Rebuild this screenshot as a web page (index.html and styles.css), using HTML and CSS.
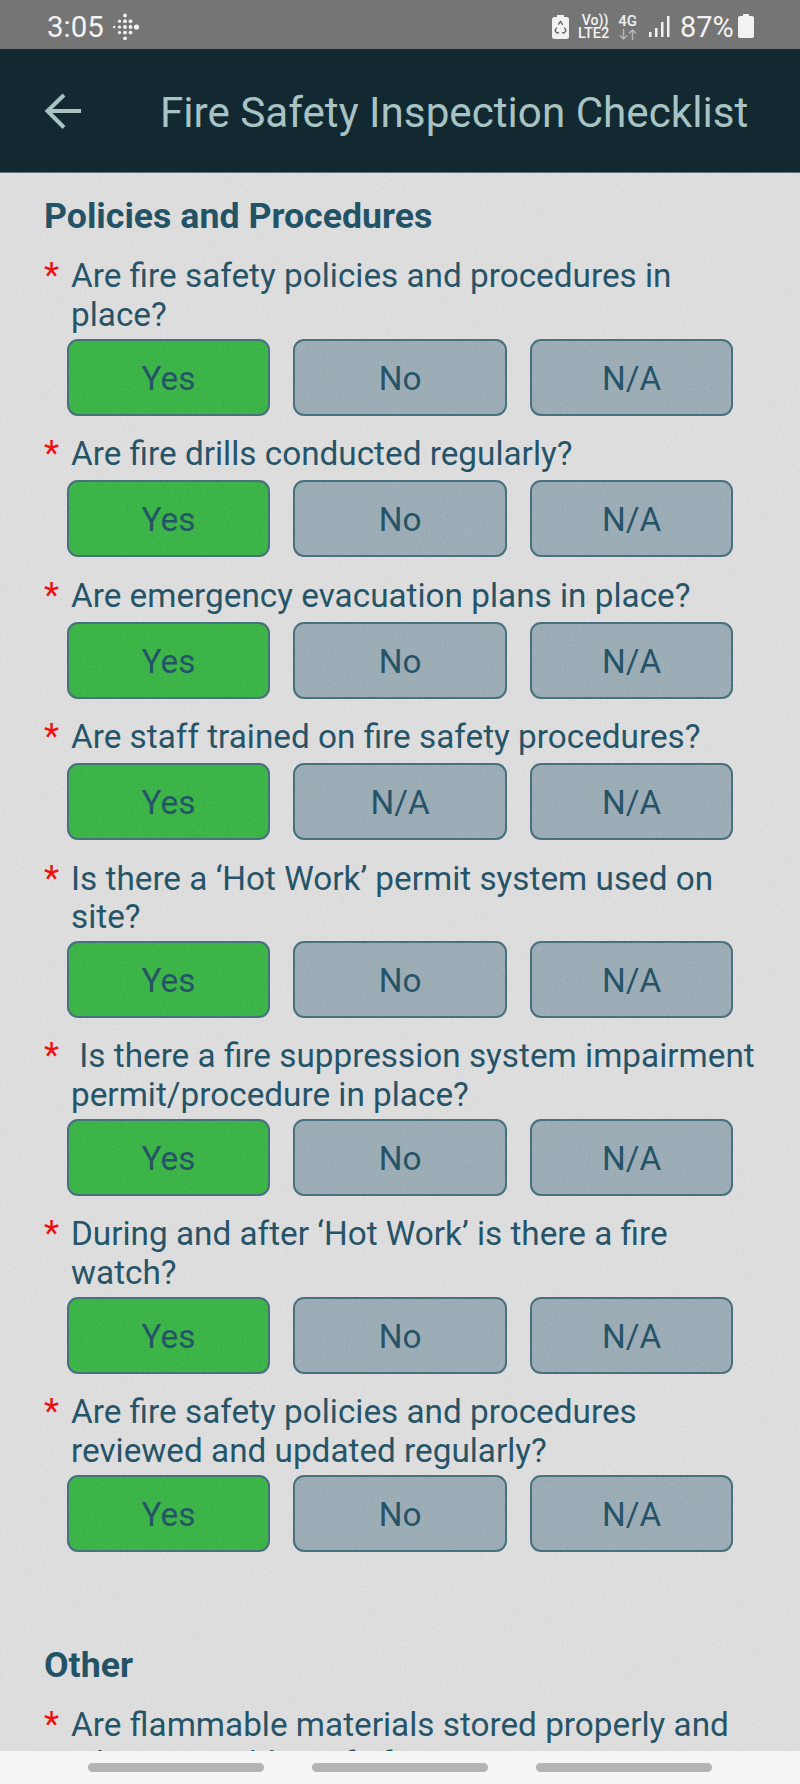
FILE: index.html
```html
<!DOCTYPE html>
<html lang="en">
<head>
<meta charset="utf-8">
<title>Fire Safety Inspection Checklist</title>
<link rel="stylesheet" href="styles.css">
</head>
<body>
<div class="app">
  <div class="status">
    <span class="time">3:05</span>
    <svg class="dots" width="30" height="30" viewBox="0 0 30 30" fill="#f2f2f2">
      <circle cx="13" cy="3.5" r="1.9"/>
      <circle cx="7.5" cy="9.2" r="1.6"/><circle cx="13" cy="9.2" r="1.9"/><circle cx="18.5" cy="9.2" r="1.9"/>
      <circle cx="2.2" cy="15" r="1.2"/><circle cx="7.5" cy="15" r="1.6"/><circle cx="13" cy="15" r="1.9"/><circle cx="18.5" cy="15" r="1.9"/><circle cx="24.5" cy="15" r="2.6"/>
      <circle cx="7.5" cy="20.6" r="1.6"/><circle cx="13" cy="20.6" r="1.9"/><circle cx="18.5" cy="20.6" r="1.9"/>
      <circle cx="13" cy="26.3" r="1.9"/>
    </svg>
    <span class="spacer"></span>
    <svg class="recycle" width="17" height="24" viewBox="0 0 17 24">
      <path fill="#f2f2f2" d="M5 0h7v2h2.5A2.5 2.5 0 0 1 17 4.500V21.500A2.500 2.500 0 0 1 14.500 24H2.500A2.500 2.500 0 0 1 0 21.500V4.500A2.500 2.500 0 0 1 2.500 2H5z"/>
      <path fill="none" stroke="#6a6a6a" stroke-width="1.400" d="M6.300 9.500 8.500 6.500 10.700 9.800M12.300 12.500 14 15.500 12.300 17.800H10M7 17.800H4.700L3 15.500 4.800 12.500"/>
    </svg>
    <span class="net">
      <span class="vo">Vo))</span>
      <span class="lte">LTE2</span>
    </span>
    <span class="net four">
      <span class="fg">4G</span>
      <svg class="arrows" width="18" height="11" viewBox="0 0 18 11" fill="none" stroke="#b4b4b4" stroke-width="1.500"><path d="M4.500 0v10M1 6.500l3.500 3.500L8 6.500M13.500 11V1M10 4.500 13.500 1 17 4.500"/></svg>
    </span>
    <svg class="signal" width="21" height="22" viewBox="0 0 21 22" fill="#f2f2f2">
      <rect x="0" y="16" width="2.500" height="5"/>
      <rect x="6" y="12" width="2.500" height="9"/>
      <rect x="12" y="6" width="2.500" height="15"/>
      <rect x="18" y="0" width="2.500" height="21"/>
    </svg>
    <span class="pct">87%</span>
    <svg class="batt" width="16" height="24" viewBox="0 0 16 24" fill="#f2f2f2">
      <path d="M5 0h6v2h3a2 2 0 0 1 2 2v18a2 2 0 0 1-2 2H2a2 2 0 0 1-2-2V4a2 2 0 0 1 2-2h3z"/>
    </svg>
  </div>

  <header class="bar">
    <svg class="back" width="38" height="38" viewBox="0 0 38 38" fill="none" stroke="#a8c3c3" stroke-width="4">
      <path d="M37 19H4M20 3 3.500 19 20 35.500"/>
    </svg>
    <h1 class="title">Fire Safety Inspection Checklist</h1>
  </header>

  <main class="content">
    <h2 class="section">Policies and Procedures</h2>

    <div class="q"><span class="star">*</span><span class="text">Are fire safety policies and procedures in place?</span></div>
    <div class="opts"><div class="opt on">Yes</div><div class="opt">No</div><div class="opt">N/A</div></div>

    <div class="q"><span class="star">*</span><span class="text">Are fire drills conducted regularly?</span></div>
    <div class="opts"><div class="opt on">Yes</div><div class="opt">No</div><div class="opt">N/A</div></div>

    <div class="q"><span class="star">*</span><span class="text">Are emergency evacuation plans in place?</span></div>
    <div class="opts"><div class="opt on">Yes</div><div class="opt">No</div><div class="opt">N/A</div></div>

    <div class="q"><span class="star">*</span><span class="text">Are staff trained on fire safety procedures?</span></div>
    <div class="opts"><div class="opt on">Yes</div><div class="opt">N/A</div><div class="opt">N/A</div></div>

    <div class="q"><span class="star">*</span><span class="text">Is there a ‘Hot Work’ permit system used on site?</span></div>
    <div class="opts"><div class="opt on">Yes</div><div class="opt">No</div><div class="opt">N/A</div></div>

    <div class="q"><span class="star">*</span><span class="text">&nbsp;Is there a fire suppression system impairment permit/procedure in place?</span></div>
    <div class="opts"><div class="opt on">Yes</div><div class="opt">No</div><div class="opt">N/A</div></div>

    <div class="q"><span class="star">*</span><span class="text">During and after ‘Hot Work’ is there a fire watch?</span></div>
    <div class="opts"><div class="opt on">Yes</div><div class="opt">No</div><div class="opt">N/A</div></div>

    <div class="q"><span class="star">*</span><span class="text">Are fire safety policies and procedures reviewed and updated regularly?</span></div>
    <div class="opts"><div class="opt on">Yes</div><div class="opt">No</div><div class="opt">N/A</div></div>

    <h2 class="section other">Other</h2>
    <div class="q"><span class="star">*</span><span class="text">Are flammable materials stored properly and where possible, safe from ignition?</span></div>

    <svg class="grain" width="800" height="1578">
      <filter id="noise"><feTurbulence type="fractalNoise" baseFrequency="0.45" numOctaves="2" seed="3"/><feColorMatrix values="1.600 0 0 0 0.050  1.600 0 0 0 0.050  1.600 0 0 0 0.050  0 0 0 0 0.070"/></filter>
      <rect width="800" height="1578" filter="url(#noise)"/>
    </svg>
  </main>

  <nav class="navbar">
    <span class="pill"></span><span class="pill"></span><span class="pill"></span>
  </nav>
</div>
</body>
</html>
```

FILE: styles.css
```css
* { box-sizing: border-box; }
html, body { margin: 0; padding: 0; }
body { width: 800px; height: 1784px; overflow: hidden; font-family: Roboto, "Liberation Sans", sans-serif; }
.app { width: 800px; height: 1784px; display: flex; flex-direction: column; background: #dcdcdc; }

.status { height: 49px; background: #757575; color: #f2f2f2; display: flex; align-items: center; padding: 5px 46px 0 47px; flex: none; }
.time { font-size: 29.400px; line-height: 30px; width: 56px; }
.dots { margin-left: 9px; }
.spacer { flex: 1; }
.recycle { margin-right: 9px; }
.net { display: flex; flex-direction: column; align-items: center; font-size: 14px; line-height: 13px; font-weight: 500; }
.vo { font-size: 14px; margin-left: 3px; }
.lte { font-size: 14.500px; }
.four { margin-left: 9px; }
.fg { font-size: 15px; line-height: 14px; }
.arrows { display: block; margin-top: 1px; }
.signal { margin-left: 12px; }
.pct { font-size: 29px; line-height: 30px; margin-left: 10px; width: 54px; }
.batt { margin-left: 4px; margin-top: -3px; }

.bar { height: 124px; background: #122932; display: flex; align-items: center; flex: none; padding: 0 0 0 44px; border-bottom: 1px solid #5f7378; }
.back { flex: none; }
.title { margin: 4px 0 0 78px; font-size: 42.200px; line-height: 48px; font-weight: 400; color: #a8c3c3; white-space: nowrap; }

.content { flex: 1; position: relative; overflow: hidden; padding: 19px 43px 0 44px; background: #dcdcdc; color: #16495e; }
.section { margin: 0; font-size: 35.700px; line-height: 48px; font-weight: 700; color: #13485c; }
.section.other { margin-top: 89px; }

.q { display: flex; font-size: 33.300px; line-height: 38.700px; min-height: 41px; margin-top: 17.200px; }
.opts + .q { margin-top: 19.100px; }
.star { width: 27px; flex: none; color: #f00000; font-size: 35px; }
.text { flex: 1; }

.opts { display: grid; grid-template-columns: 203px 214px 203px; column-gap: 23px; margin: 4.400px 0 0 23px; }
.opt { height: 77px; padding-top: 2px; border: 2px solid #3d6776; border-radius: 11px; background: #96a8b2; color: #16495e; font-size: 33.300px; display: flex; align-items: center; justify-content: center; }
.opt.on { background: #2fb03c; }

.grain { position: absolute; left: 0; top: 0; pointer-events: none; }

.navbar { height: 33px; flex: none; background: #f5f5f5; display: flex; position: relative; z-index: 1; padding: 12px 88px 0; justify-content: space-between; }
.pill { width: 176px; height: 9px; border-radius: 5px; background: #b3b3b3; }
```
